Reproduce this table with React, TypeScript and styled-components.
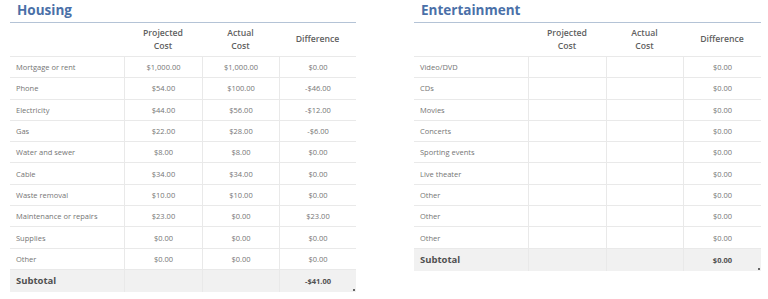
import styled, { createGlobalStyle } from "styled-components";

const GlobalStyle = createGlobalStyle`
  body {
    margin: 0;
    background: #ffffff;
    font-family: "Open Sans", "Liberation Sans", sans-serif;
  }
`;

const Page = styled.main`
  width: 768px;
  height: 299px;
  padding-left: 10px;

  display: flex;
  flex-direction: row;
  align-items: flex-start;
  gap: 58px;

  box-sizing: border-box;
  overflow: hidden;
`;

const Section = styled.section<{ $width: number }>`
  width: ${(p) => p.$width}px;
  position: relative;
`;

const Title = styled.h2`
  margin: 0;
  height: 22px;
  padding-left: 7px;

  border-bottom: 1px solid #b4c3d6;

  font-size: 13.5px;
  font-weight: 700;
  line-height: 21px;
  color: #4a70a8;
`;

const Row = styled.div<{ $sub?: boolean }>`
  display: grid;
  grid-template-columns: 114px 78px 77px 1fr;
  height: ${(p) => (p.$sub ? 22 : 21.3)}px;

  border-bottom: ${(p) => (p.$sub ? "none" : "1px solid #e9e9e9")};
  background: ${(p) => (p.$sub ? "#f1f1f1" : "transparent")};
  box-sizing: border-box;
`;

const HeadRow = styled.div`
  display: grid;
  grid-template-columns: 114px 78px 77px 1fr;
  height: 34px;

  border-bottom: 1px solid #e9e9e9;
  box-sizing: border-box;
`;

const HeadCell = styled.div`
  display: flex;
  align-items: center;
  justify-content: center;

  font-size: 8.7px;
  font-weight: 600;
  line-height: 13px;
  color: #5f5f5f;
  text-align: center;
`;

const Cell = styled.div<{ $label?: boolean; $sub?: boolean }>`
  display: flex;
  align-items: center;
  justify-content: ${(p) => (p.$label ? "flex-start" : "center")};
  padding-left: ${(p) => (p.$label ? "6px" : "0")};

  border-left: ${(p) => (p.$label ? "none" : "1px solid #e9e9e9")};

  font-size: ${(p) => (p.$sub && p.$label ? "9.5px" : "7.5px")};
  font-weight: ${(p) => (p.$sub ? 700 : 400)};
  color: ${(p) => (p.$sub ? "#505050" : "#757575")};
  white-space: nowrap;
`;

const Handle = styled.span`
  position: absolute;
  right: 1px;
  bottom: 1px;
  width: 2px;
  height: 2px;
  background: #666;
`;

type Item = [string, string, string, string];

const housing: Item[] = [
  ["Mortgage or rent", "$1,000.00", "$1,000.00", "$0.00"],
  ["Phone", "$54.00", "$100.00", "-$46.00"],
  ["Electricity", "$44.00", "$56.00", "-$12.00"],
  ["Gas", "$22.00", "$28.00", "-$6.00"],
  ["Water and sewer", "$8.00", "$8.00", "$0.00"],
  ["Cable", "$34.00", "$34.00", "$0.00"],
  ["Waste removal", "$10.00", "$10.00", "$0.00"],
  ["Maintenance or repairs", "$23.00", "$0.00", "$23.00"],
  ["Supplies", "$0.00", "$0.00", "$0.00"],
  ["Other", "$0.00", "$0.00", "$0.00"],
];

const entertainment: Item[] = [
  "Video/DVD",
  "CDs",
  "Movies",
  "Concerts",
  "Sporting events",
  "Live theater",
  "Other",
  "Other",
  "Other",
].map((name) => [name, "", "", "$0.00"] as Item);

const BudgetTable = ({
  title,
  items,
  subtotal,
  width,
}: {
  title: string;
  items: Item[];
  subtotal: string;
  width: number;
}) => (
  <Section $width={width}>
    <Title>{title}</Title>
    <HeadRow>
      <HeadCell />
      <HeadCell>
        Projected
        <br />
        Cost
      </HeadCell>
      <HeadCell>
        Actual
        <br />
        Cost
      </HeadCell>
      <HeadCell>Difference</HeadCell>
    </HeadRow>
    {items.map((item, i) => (
      <Row key={i}>
        <Cell $label>{item[0]}</Cell>
        <Cell>{item[1]}</Cell>
        <Cell>{item[2]}</Cell>
        <Cell>{item[3]}</Cell>
      </Row>
    ))}
    <Row $sub>
      <Cell $label $sub>
        Subtotal
      </Cell>
      <Cell $sub />
      <Cell $sub />
      <Cell $sub>{subtotal}</Cell>
    </Row>
    <Handle />
  </Section>
);

const App = () => {
  return (
    <>
      <GlobalStyle />
      <Page>
        <BudgetTable title="Housing" items={housing} subtotal="-$41.00" width={346} />
        <BudgetTable
          title="Entertainment"
          items={entertainment}
          subtotal="$0.00"
          width={347}
        />
      </Page>
    </>
  );
};

export default App;
